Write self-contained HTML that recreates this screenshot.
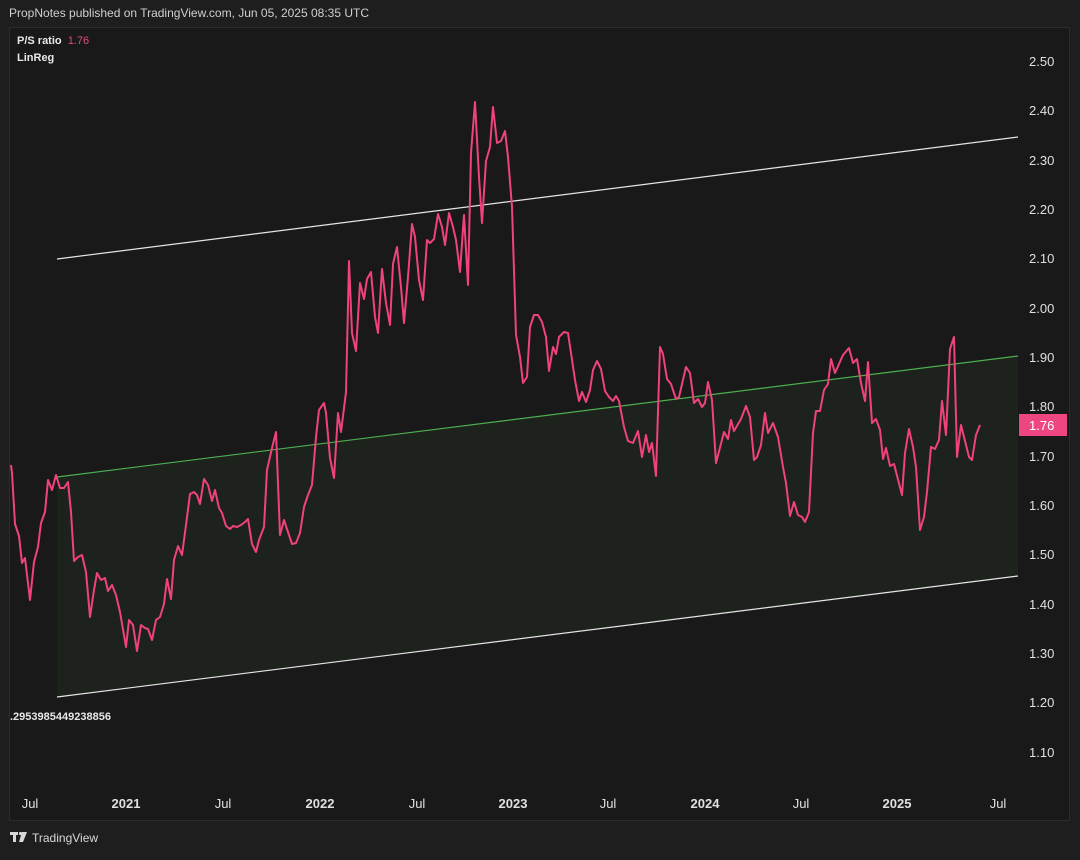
<!DOCTYPE html>
<html><head><meta charset="utf-8"><style>
html,body{margin:0;padding:0;background:#1e1e1e;}
body{width:1080px;height:855px;overflow:hidden;font-family:"Liberation Sans",sans-serif;}
</style></head><body>
<svg width="1080" height="855" viewBox="0 0 1080 855" xmlns="http://www.w3.org/2000/svg" font-family="Liberation Sans, sans-serif">
<rect width="1080" height="855" fill="#1e1e1e"/>
<text x="9" y="17" font-size="12" fill="#cfcfcf">PropNotes published on TradingView.com, Jun 05, 2025 08:35 UTC</text>
<rect x="9.5" y="27.5" width="1060" height="793" fill="#191919" stroke="#2c2c2c"/>
<!-- fill channel -->
<polygon points="57,477 1018,356 1018,576 57,697" fill="#1e221d"/>
<line x1="57" y1="259" x2="1018" y2="137" stroke="#e6e6e6" stroke-width="1.2"/>
<line x1="57" y1="477" x2="1018" y2="356" stroke="#4caf50" stroke-width="1.2"/>
<line x1="57" y1="697" x2="1018" y2="576" stroke="#e6e6e6" stroke-width="1.2"/>
<polyline fill="none" stroke="#f0427c" stroke-width="2" stroke-linejoin="round" points="11,465 12,473 15,524 19,536 22,563 25,558 30,600 34,562 38,547 41,523 45,512 48,480 52,490 56,475 60,488 64,488 68,482 71,512 74,561 78,557 82,555 86,572 90,617 94,590 97,573 101,580 105,578 108,591 112,585 116,595 120,612 126,647 129,620 133,625 137,651 141,625 145,628 148,629 152,640 156,620 160,617 164,604 167,579 171,599 174,560 178,546 182,555 186,525 190,494 194,492 197,495 200,504 204,479 208,485 212,501 215,490 219,508 222,513 226,526 230,529 233,526 237,527 241,525 245,522 248,519 252,544 256,552 259,540 264,527 267,470 272,448 276,432 280,535 284,520 288,532 292,544 296,543 300,533 304,507 308,495 312,485 316,437 319,410 324,403 326,413 330,458 334,478 338,413 341,432 346,392 349,261 352,333 356,351 360,283 364,299 367,279 371,272 375,317 378,333 382,269 386,303 390,325 393,264 397,247 401,287 404,323 408,277 412,224 415,237 419,280 423,300 427,240 430,243 434,239 438,214 442,227 445,245 449,213 453,227 456,240 460,272 464,215 468,285 471,153 475,102 479,177 482,223 486,161 490,147 493,107 497,143 501,141 505,131 508,157 512,207 516,335 520,357 523,383 527,377 530,327 534,315 538,315 542,322 546,337 549,371 553,347 556,354 559,337 564,332 568,333 571,353 575,380 579,401 582,392 586,402 590,390 593,370 597,361 601,369 605,391 609,397 613,401 616,396 619,401 624,427 628,441 633,443 638,431 642,457 646,435 649,452 652,443 656,476 660,347 663,354 667,379 671,384 676,399 679,397 686,367 690,373 694,403 698,399 702,407 705,403 708,382 712,400 716,463 724,432 728,439 731,420 734,431 741,419 746,406 750,417 754,460 757,457 761,445 765,413 768,433 773,423 778,437 783,467 786,483 790,516 794,502 798,515 802,517 805,522 809,512 813,433 816,411 820,411 824,390 828,384 831,359 835,373 843,355 849,348 853,363 857,359 861,383 865,401 868,362 872,423 876,419 880,430 883,459 886,448 890,466 894,464 902,495 905,453 909,429 913,447 916,467 920,530 924,517 927,492 931,447 935,449 939,440 942,401 946,435 950,349 954,337 957,457 961,425 969,457 972,460 976,435 980,425"/>
<text x="17" y="44" font-size="11" font-weight="bold" fill="#e8e8e8">P/S ratio <tspan fill="#e04a7e" font-weight="normal" dx="3">1.76</tspan></text>
<text x="17" y="61" font-size="11" font-weight="bold" fill="#e8e8e8">LinReg</text>
<text x="10" y="720" font-size="11" font-weight="bold" fill="#e8e8e8">.2953985449238856</text>
<g font-size="13" fill="#e0e0e0" text-anchor="start">
<text x="1029" y="66">2.50</text><text x="1029" y="115">2.40</text><text x="1029" y="165">2.30</text><text x="1029" y="214">2.20</text><text x="1029" y="263">2.10</text><text x="1029" y="313">2.00</text><text x="1029" y="362">1.90</text><text x="1029" y="411">1.80</text><text x="1029" y="461">1.70</text><text x="1029" y="510">1.60</text><text x="1029" y="559">1.50</text><text x="1029" y="609">1.40</text><text x="1029" y="658">1.30</text><text x="1029" y="707">1.20</text><text x="1029" y="757">1.10</text>
</g>
<rect x="1019" y="414" width="48" height="22" fill="#ee4583"/>
<text x="1029" y="430" font-size="13" fill="#ffffff">1.76</text>
<g font-size="13" fill="#e0e0e0" text-anchor="middle">
<text x="30" y="808">Jul</text><text x="126" y="808" font-weight="bold">2021</text><text x="223" y="808">Jul</text><text x="320" y="808" font-weight="bold">2022</text><text x="417" y="808">Jul</text><text x="513" y="808" font-weight="bold">2023</text><text x="608" y="808">Jul</text><text x="705" y="808" font-weight="bold">2024</text><text x="801" y="808">Jul</text><text x="897" y="808" font-weight="bold">2025</text><text x="998" y="808">Jul</text>
</g>
<g fill="#d8d8d8">
<rect x="10" y="832" width="8" height="3"/><rect x="13" y="832" width="3" height="10"/>
<circle cx="20.5" cy="833.5" r="1.6"/><polygon points="22,832 27,832 23,842 19,842"/>
</g>
<text x="32" y="842" font-size="12" fill="#d8d8d8">TradingView</text>
</svg>
</body></html>
